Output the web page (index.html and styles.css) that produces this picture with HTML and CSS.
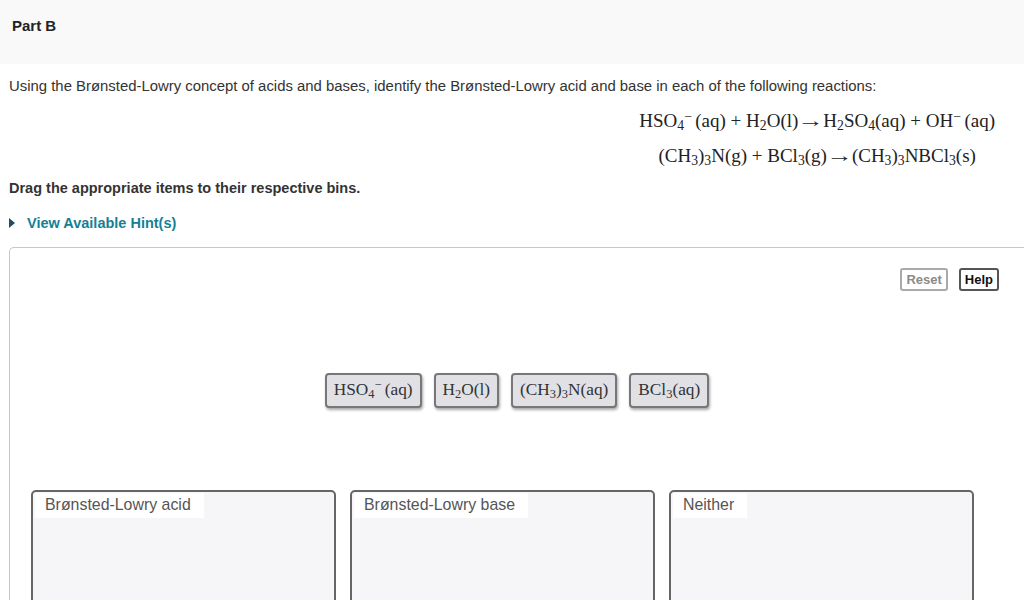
FILE: index.html
```html
<!DOCTYPE html>
<html>
<head>
<meta charset="utf-8">
<link rel="stylesheet" href="styles.css">
</head>
<body>
<div class="header"><span class="part">Part B</span></div>
<div class="content">
  <p class="intro">Using the Brønsted-Lowry concept of acids and bases, identify the Brønsted-Lowry acid and base in each of the following reactions:</p>
  <div class="eqwrap">
    <div class="eqs">
      <div class="eq">HSO<sub>4</sub><sup>−</sup>(aq) + H<sub>2</sub>O(l)<span class="arr">→</span>H<sub>2</sub>SO<sub>4</sub>(aq) + OH<sup>−</sup>(aq)</div>
      <div class="eq">(CH<sub>3</sub>)<sub>3</sub>N(g) + BCl<sub>3</sub>(g)<span class="arr">→</span>(CH<sub>3</sub>)<sub>3</sub>NBCl<sub>3</sub>(s)</div>
    </div>
  </div>
  <p class="instr">Drag the appropriate items to their respective bins.</p>
  <div class="hint"><span class="tri"></span>View Available Hint(s)</div>
  <div class="panel">
    <div class="btns">
      <span class="btn reset">Reset</span>
      <span class="btn help">Help</span>
    </div>
    <div class="chips">
      <span class="chip">HSO<sub>4</sub><sup>−</sup>(aq)</span>
      <span class="chip">H<sub>2</sub>O(l)</span>
      <span class="chip">(CH<sub>3</sub>)<sub>3</sub>N(aq)</span>
      <span class="chip">BCl<sub>3</sub>(aq)</span>
    </div>
    <div class="bins">
      <div class="bin"><span class="label">Brønsted-Lowry acid</span></div>
      <div class="bin"><span class="label">Brønsted-Lowry base</span></div>
      <div class="bin"><span class="label">Neither</span></div>
    </div>
  </div>
</div>
</body>
</html>
```
FILE: styles.css
```css
html, body { margin: 0; padding: 0; background: #fff; overflow: hidden; }
body { font-family: Arial, "Liberation Sans", sans-serif; color: #333; width: 1024px; height: 600px; }
.header { height: 64px; background: #f9f9f9; box-sizing: border-box; padding: 17px 0 0 12px; }
.part { font-weight: bold; font-size: 15px; color: #222; }
.content { padding-left: 9px; }
.intro { margin: 0; padding-top: 13px; font-size: 14.9px; line-height: 18px; color: #333; }
.eqwrap { display: flex; justify-content: flex-end; padding-right: 29px; margin-top: 14px; }
.eqs { text-align: center; font-family: "Liberation Serif", "DejaVu Serif", serif; font-size: 19px; color: #222; }
.eq { line-height: 23px; margin-bottom: 12px; }
.arr { display: inline-block; transform: scaleX(1.4); margin: 0 3px; }
.eq sub, .chip sub { font-size: 0.72em; vertical-align: -0.25em; line-height: 0; }
.eq sup, .chip sup { font-size: 0.72em; vertical-align: 0.45em; line-height: 0; margin-right: 0.25em; }
.instr { margin: 0; font-weight: bold; font-size: 14.5px; color: #333; line-height: 18px; }
.hint { margin-top: 17px; font-weight: bold; font-size: 14.5px; color: #167f95; line-height: 18px; display: flex; align-items: center; }
.tri { width: 0; height: 0; border-left: 6px solid #1f4e66; border-top: 5px solid transparent; border-bottom: 5px solid transparent; margin-right: 12px; }
.panel { margin-top: 15px; border: 1px solid #c8c8c8; border-right: none; border-bottom: none; border-radius: 5px 0 0 0; height: 353px; box-sizing: border-box; padding: 20px 0 0 21px; overflow: hidden; }
.btns { display: flex; justify-content: flex-end; gap: 11px; padding-right: 25px; }
.btn { font-size: 13px; font-weight: bold; padding: 2px 4px; border-radius: 3px; line-height: 15px; }
.reset { color: #8a8a8a; border: 2px solid #aaa; }
.help { color: #111; border: 2px solid #555; }
.chips { display: flex; justify-content: center; gap: 12px; margin-top: 82px; padding-right: 21px; }
.chip { font-family: "Liberation Serif", "DejaVu Serif", serif; font-size: 17.3px; color: #333; background: #e1e1e5; border: 2px solid #777; border-radius: 4px; padding: 6px 7px 7px; line-height: 18px; box-shadow: 1px 2px 3px rgba(0,0,0,0.35); }
.bins { display: flex; gap: 14px; margin-top: 82px; }
.bin { width: 305px; height: 140px; box-sizing: border-box; border: 2px solid #666; border-radius: 5px; background: #f6f6f8; padding: 1px 0 0 2px; flex-shrink: 0; }
.label { display: inline-block; background: #fff; font-size: 15.9px; color: #555; padding: 3px 13px 4px 10px; line-height: 18px; }
```
